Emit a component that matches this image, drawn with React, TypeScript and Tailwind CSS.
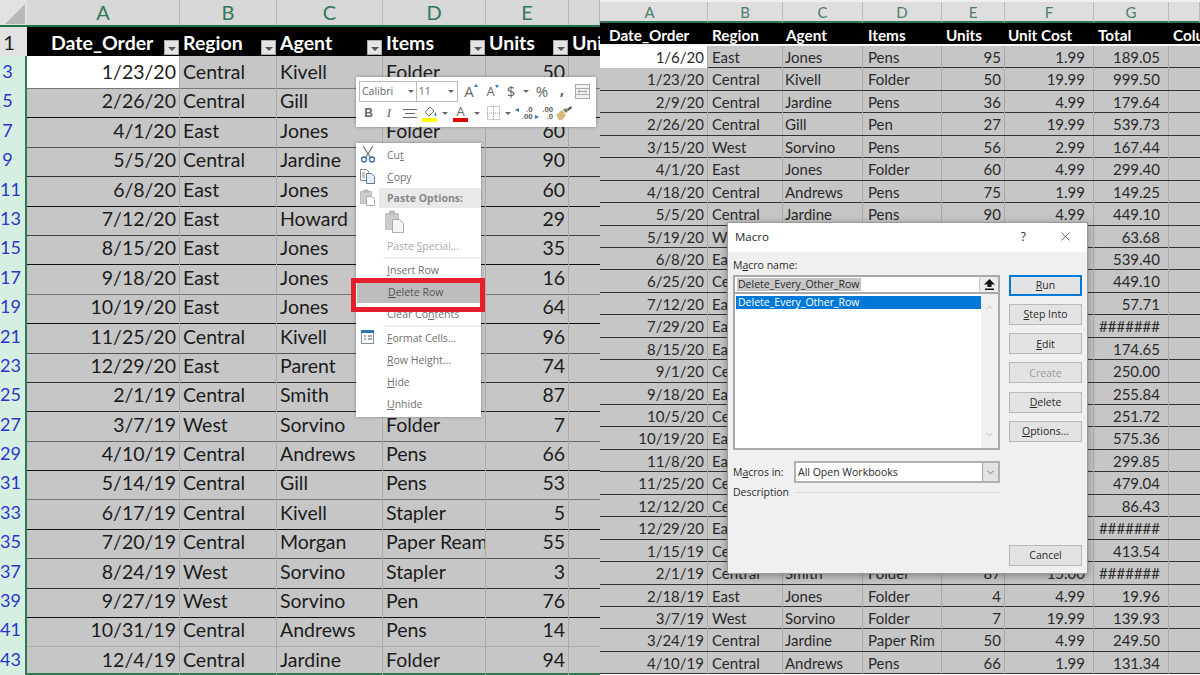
import { ChevronDown, ChevronUp, X } from 'lucide-react';
import type { ReactNode } from 'react';

const leftRows = [
  ['3', '1/23/20', 'Central', 'Kivell', 'Folder', '50'],
  ['5', '2/26/20', 'Central', 'Gill', 'Pen', '27'],
  ['7', '4/1/20', 'East', 'Jones', 'Folder', '60'],
  ['9', '5/5/20', 'Central', 'Jardine', 'Pens', '90'],
  ['11', '6/8/20', 'East', 'Jones', 'Pens', '60'],
  ['13', '7/12/20', 'East', 'Howard', 'Pens', '29'],
  ['15', '8/15/20', 'East', 'Jones', 'Pens', '35'],
  ['17', '9/18/20', 'East', 'Jones', 'Pens', '16'],
  ['19', '10/19/20', 'East', 'Jones', 'Pens', '64'],
  ['21', '11/25/20', 'Central', 'Kivell', 'Pens', '96'],
  ['23', '12/29/20', 'East', 'Parent', 'Pens', '74'],
  ['25', '2/1/19', 'Central', 'Smith', 'Folder', '87'],
  ['27', '3/7/19', 'West', 'Sorvino', 'Folder', '7'],
  ['29', '4/10/19', 'Central', 'Andrews', 'Pens', '66'],
  ['31', '5/14/19', 'Central', 'Gill', 'Pens', '53'],
  ['33', '6/17/19', 'Central', 'Kivell', 'Stapler', '5'],
  ['35', '7/20/19', 'Central', 'Morgan', 'Paper Ream', '55'],
  ['37', '8/24/19', 'West', 'Sorvino', 'Stapler', '3'],
  ['39', '9/27/19', 'West', 'Sorvino', 'Pen', '76'],
  ['41', '10/31/19', 'Central', 'Andrews', 'Pens', '14'],
  ['43', '12/4/19', 'Central', 'Jardine', 'Folder', '94'],
];

// the gridlines came out uneven in the downscaled shot
const leftLines = [
  'border-[#777]', 'border-[#111]', 'border-[#555]', 'border-[#333]', 'border-[#111]', 'border-[#444]', 'border-[#111]',
  'border-[#777]', 'border-[#111]', 'border-[#555]', 'border-[#333]', 'border-[#222]', 'border-[#666]', 'border-[#111]',
  'border-[#777]', 'border-[#111]', 'border-[#555]', 'border-[#333]', 'border-[#111]', 'border-[#aaa]', 'border-transparent',
];

const rightRows = [
  ['1/6/20', 'East', 'Jones', 'Pens', '95', '1.99', '189.05'],
  ['1/23/20', 'Central', 'Kivell', 'Folder', '50', '19.99', '999.50'],
  ['2/9/20', 'Central', 'Jardine', 'Pens', '36', '4.99', '179.64'],
  ['2/26/20', 'Central', 'Gill', 'Pen', '27', '19.99', '539.73'],
  ['3/15/20', 'West', 'Sorvino', 'Pens', '56', '2.99', '167.44'],
  ['4/1/20', 'East', 'Jones', 'Folder', '60', '4.99', '299.40'],
  ['4/18/20', 'Central', 'Andrews', 'Pens', '75', '1.99', '149.25'],
  ['5/5/20', 'Central', 'Jardine', 'Pens', '90', '4.99', '449.10'],
  ['5/19/20', 'West', '', '', '', '', '63.68'],
  ['6/8/20', 'East', '', '', '', '', '539.40'],
  ['6/25/20', 'Central', '', '', '', '', '449.10'],
  ['7/12/20', 'East', '', '', '', '', '57.71'],
  ['7/29/20', 'East', '', '', '', '', '#######'],
  ['8/15/20', 'East', '', '', '', '', '174.65'],
  ['9/1/20', 'Central', '', '', '', '', '250.00'],
  ['9/18/20', 'East', '', '', '', '', '255.84'],
  ['10/5/20', 'Central', '', '', '', '', '251.72'],
  ['10/19/20', 'East', '', '', '', '', '575.36'],
  ['11/8/20', 'East', '', '', '', '', '299.85'],
  ['11/25/20', 'Central', '', '', '', '', '479.04'],
  ['12/12/20', 'Central', '', '', '', '', '86.43'],
  ['12/29/20', 'East', '', '', '', '', '#######'],
  ['1/15/19', 'Central', '', '', '', '', '413.54'],
  ['2/1/19', 'Central', 'Smith', 'Folder', '87', '15.00', '#######'],
  ['2/18/19', 'East', 'Jones', 'Folder', '4', '4.99', '19.96'],
  ['3/7/19', 'West', 'Sorvino', 'Folder', '7', '19.99', '139.93'],
  ['3/24/19', 'Central', 'Jardine', 'Paper Rim', '50', '4.99', '249.50'],
  ['4/10/19', 'Central', 'Andrews', 'Pens', '66', '1.99', '131.34'],
];

function FilterButton() {
  return (
    <span className="mb-[2px] mr-[1px] flex h-[15px] w-[15px] shrink-0 items-center justify-center border border-[#aaa] bg-[#e4e4e4]">
      <span className="mt-[2px] h-0 w-0 border-x-[4px] border-t-[4px] border-x-transparent border-t-[#555]" />
    </span>
  );
}

function LeftHeaderCell({ label, first }: { label: string; first?: boolean }) {
  return (
    <div className={`flex items-end justify-between overflow-hidden ${first ? 'pl-6' : 'pl-[3px]'}`}>
      <span className="mt-[2px] self-center whitespace-nowrap text-[19.5px] font-bold leading-none text-white">{label}</span>
      <FilterButton />
    </div>
  );
}

function LeftSheet() {
  return (
    <div className="w-[600px] text-[19.5px] text-[#1c1c1c]">
      <div className="grid h-[27px] grid-cols-[27px_153px_97px_106px_103px_83px_31px] border-b-2 border-[#217346] bg-[#d8d8d8] text-center text-[20px] leading-[25px] text-[#2f7a55]">
        <div className="relative bg-[#e2e2e2]">
          <span className="absolute right-[2px] bottom-[1px] h-0 w-0 border-b-[20px] border-l-[20px] border-b-[#b9b9b9] border-l-transparent" />
        </div>
        {['A', 'B', 'C', 'D', 'E', ''].map((c, i) => (
          <div key={i} className="border-r border-[#b8b8b8] first:border-l">{c}</div>
        ))}
      </div>
      <div className="grid h-[29px] grid-cols-[27px_153px_97px_106px_103px_83px_31px] bg-black">
        <div className="bg-[#e2e2e2] pr-[9px] text-center text-[20px] leading-[30px] text-[#222]">1</div>
        <LeftHeaderCell label="Date_Order" first />
        <LeftHeaderCell label="Region" />
        <LeftHeaderCell label="Agent" />
        <LeftHeaderCell label="Items" />
        <LeftHeaderCell label="Units" />
        <div className="overflow-hidden pl-[3px] text-[19.5px] font-bold leading-[31px] text-white">Units</div>
      </div>
      {leftRows.map((r, i) => (
        <div key={r[0]} className="grid h-[29.4px] grid-cols-[27px_153px_97px_106px_103px_83px_31px] bg-[#c6c6c6] leading-[31px]">
          <div className="border-r-2 border-b-2 border-r-[#2f7a55] border-b-[#f4f4f4] bg-[#d5f0e2] pr-[10px] text-center text-[18px] text-[#2a35cc]">{r[0]}</div>
          <div className={`border-b border-r border-r-[#aaa] pr-[3px] text-right ${leftLines[i]} ${i === 0 ? 'bg-white' : ''}`}>{r[1]}</div>
          <div className={`border-b border-r border-r-[#aaa] pl-[3px] ${leftLines[i]}`}>{r[2]}</div>
          <div className={`border-b border-r border-r-[#aaa] pl-[3px] ${leftLines[i]}`}>{r[3]}</div>
          <div className={`overflow-hidden whitespace-nowrap border-b border-r border-r-[#aaa] pl-[3px] ${leftLines[i]}`}>{r[4]}</div>
          <div className={`border-b border-r border-r-[#aaa] pr-[3px] text-right ${leftLines[i]}`}>{r[5]}</div>
          <div className={`border-b ${leftLines[i]}`} />
        </div>
      ))}
      <div className="ml-[25px] h-[2px] bg-[#2f7a55]" />
    </div>
  );
}

function RightSheet() {
  const grid = 'grid grid-cols-[108px_75px_80px_79px_63px_89px_75px_31px]';
  return (
    <div className="w-[600px] text-[15px] text-[#2a2a2a]">
      <div className={`${grid} h-[23px] border-t-2 border-b-2 border-t-[#f0f0f0] border-b-[#2f7a55] bg-[#dedede] text-center leading-[20px] text-[#4a8068]`}>
        {['A', 'B', 'C', 'D', 'E', 'F', 'G', ''].map((c, i) => (
          <div key={i} className="border-r border-[#b8b8b8] first:pr-2">{c}</div>
        ))}
      </div>
      <div className={`${grid} h-[23px] overflow-hidden border-b-2 border-[#f2f6f3] bg-black text-[15.3px] font-bold leading-[24px] text-white`}>
        <div className="pl-[9px]">Date_Order</div>
        <div className="pl-1">Region</div>
        <div className="pl-[3px]">Agent</div>
        <div className="pl-[5px]">Items</div>
        <div className="pl-1">Units</div>
        <div className="pl-[3px]">Unit Cost</div>
        <div className="pl-1">Total</div>
        <div className="whitespace-nowrap pl-1">Column1</div>
      </div>
      {rightRows.map((r, i) => (
        <div key={r[0]} className={`${grid} h-[22.44px] border-b border-[#333] bg-[#c6c6c6] leading-[22px]`}>
          <div className={`border-r border-[#aaa] pr-[3px] text-right ${i === 0 ? 'bg-white' : ''}`}>{r[0]}</div>
          <div className="border-r border-[#aaa] pl-1">{r[1]}</div>
          <div className="border-r border-[#aaa] pl-[2px]">{r[2]}</div>
          <div className="border-r border-[#aaa] pl-[5px]">{r[3]}</div>
          <div className="border-r border-[#aaa] pr-[3px] text-right">{r[4]}</div>
          <div className="border-r border-[#aaa] pr-2 text-right">{r[5]}</div>
          <div className="border-r border-[#aaa] pr-2 text-right">{r[6]}</div>
          <div />
        </div>
      ))}
    </div>
  );
}

function Caret() {
  return <span className="h-0 w-0 border-x-[3px] border-t-[3px] border-x-transparent border-t-[#666]" />;
}

function Slot({ w, children }: { w: string; children?: ReactNode }) {
  return <div className={`flex h-5 shrink-0 items-center justify-center ${w}`}>{children}</div>;
}

function MiniToolbar() {
  return (
    <div className="absolute left-[356px] top-[77px] h-[50px] w-[240px] bg-white px-[3px] pt-1 font-['Open_Sans',sans-serif] text-[#666] shadow-[0_0_3px_rgba(0,0,0,0.35)]">
      <div className="flex h-[21px] items-center">
        <div className="flex h-[21px] w-[59px] items-center justify-between border border-[#bbb] px-[2px] text-[10.5px]">
          Calibri
          <Caret />
        </div>
        <div className="flex h-[21px] w-[42px] items-center justify-between border border-l-0 border-[#bbb] pl-[2px] pr-[3px] text-[10.5px]">
          11
          <Caret />
        </div>
        <Slot w="w-[22px]">
          <span className="relative text-[15px] leading-none text-[#666]">A<span className="absolute -right-[4px] top-0 h-0 w-0 border-x-[2px] border-b-[3px] border-x-transparent border-b-[#2e75b6]" /></span>
        </Slot>
        <Slot w="w-[21px]">
          <span className="relative text-[13px] leading-none text-[#666]">A<span className="absolute -right-[4px] top-0 h-0 w-0 border-x-[2px] border-t-[3px] border-x-transparent border-t-[#2e75b6]" /></span>
        </Slot>
        <Slot w="w-[20px]"><span className="text-[15px]">$</span></Slot>
        <Slot w="w-[10px]"><Caret /></Slot>
        <Slot w="w-[22px]"><span className="text-[15px]">%</span></Slot>
        <Slot w="w-[18px]"><span className="-mt-[5px] text-[16px] font-bold leading-none">,</span></Slot>
        <Slot w="w-[22px]">
          <svg width="15" height="15" viewBox="0 0 15 15" fill="none" stroke="#aaa">
            <rect x="0.5" y="0.5" width="14" height="14" fill="#f2f2f2" />
            <path d="M0 4.5h15M0 10.5h15M3 7.5h9M3 7.5l2-1.5M3 7.5l2 1.5M12 7.5l-2-1.5M12 7.5l-2 1.5" />
          </svg>
        </Slot>
      </div>
      <div className="mt-[1px] flex h-5 items-center">
        <Slot w="w-[19px]"><span className="font-['Liberation_Sans',sans-serif] text-[12px] font-bold">B</span></Slot>
        <Slot w="w-[22px]"><span className="font-['Liberation_Serif',serif] text-[13px] italic">I</span></Slot>
        <Slot w="w-[20px]">
          <svg width="14" height="11" viewBox="0 0 14 11" stroke="#666"><path d="M0 1.5h14M2 5.5h10M0 9.5h14" /></svg>
        </Slot>
        <Slot w="w-[20px]">
          <svg width="16" height="17" viewBox="0 0 16 17" fill="none">
            <path d="M3 7l5-5 4 4-5 5z" stroke="#777" fill="#fff" />
            <path d="M13 7c1 2 2 3 1 4s-2-1-1-4z" fill="#2e75b6" />
            <rect x="0" y="13" width="15" height="4" fill="#ffff00" />
          </svg>
        </Slot>
        <Slot w="w-[10px]"><Caret /></Slot>
        <Slot w="w-[21px]">
          <span className="relative flex h-[17px] w-[15px] justify-center text-[13px] leading-[13px] text-[#666]">A<span className="absolute bottom-0 left-0 h-[4px] w-[15px] bg-[#e00000]" /></span>
        </Slot>
        <Slot w="w-[12px]"><Caret /></Slot>
        <Slot w="w-[20px]">
          <svg width="13" height="14" viewBox="0 0 13 14" fill="none" stroke="#999" strokeDasharray="1 1">
            <rect x="0.5" y="0.5" width="12" height="13" />
            <path d="M0 7h13M6.5 0v14" />
          </svg>
        </Slot>
        <Slot w="w-[10px]"><Caret /></Slot>
        <Slot w="w-[21px]">
          <span className="relative flex h-[15px] w-[18px] flex-col items-end text-[7.5px] font-bold leading-[7.5px]">
            <span>.0</span>
            <span>.00</span>
            <span className="absolute left-0 top-[2px] h-0 w-0 border-y-[2.5px] border-r-[4px] border-y-transparent border-r-[#2e75b6]" />
          </span>
        </Slot>
        <Slot w="w-[20px]">
          <span className="relative flex h-[15px] w-[18px] flex-col items-end text-[7.5px] font-bold leading-[7.5px]">
            <span>.00</span>
            <span>.0</span>
            <span className="absolute left-0 bottom-[2px] h-0 w-0 border-y-[2.5px] border-l-[4px] border-y-transparent border-l-[#2e75b6]" />
          </span>
        </Slot>
        <Slot w="w-[20px]">
          <svg width="16" height="14" viewBox="0 0 16 14">
            <path d="M0 9l6-5 4 5-4 5H3z" fill="#d9b679" />
            <path d="M7 4l3-2 2 3-2 2z" fill="#777" />
            <path d="M11 3l4-3 1 2-4 3z" fill="#555" />
          </svg>
        </Slot>
      </div>
    </div>
  );
}

function MenuItem({ before, key_, after, muted, active }: { before?: string; key_: string; after?: string; muted?: boolean; active?: boolean }) {
  return (
    <div className={`h-[22px] pl-[31px] leading-[22px] ${muted ? 'text-[#aaa]' : ''} ${active ? 'bg-[#bdbdbd] text-[#555]' : ''}`}>
      {before}<u>{key_}</u>{after}
    </div>
  );
}

function MenuIcon({ top, children }: { top: string; children: ReactNode }) {
  return <div className={`absolute left-[4px] ${top}`}>{children}</div>;
}

function ContextMenu() {
  return (
    <div className="absolute left-[356px] top-[143px] h-[274px] w-[125px] bg-white py-px font-['Open_Sans',sans-serif] text-[10.5px] text-[#707070] shadow-[0_0_3px_rgba(0,0,0,0.35)]">
      <MenuIcon top="top-[3px]">
        <svg width="16" height="17" viewBox="0 0 16 17" fill="none">
          <path d="M3 0l7 11M13 0L6 11" stroke="#777" strokeWidth="1.3" />
          <circle cx="4" cy="13.5" r="2.5" stroke="#2e6da4" strokeWidth="1.3" />
          <circle cx="12" cy="13.5" r="2.5" stroke="#2e6da4" strokeWidth="1.3" />
        </svg>
      </MenuIcon>
      <MenuIcon top="top-[26px]">
        <svg width="16" height="15" viewBox="0 0 16 15" fill="none" stroke="#888">
          <path d="M0.5 0.5h6l2 2v9h-8z" fill="#fff" />
          <path d="M6.5 4.5h5l3 3v7h-8z" fill="#e8eef5" stroke="#5b7ea5" />
          <path d="M2 4h3M2 6h3M2 8h3" />
        </svg>
      </MenuIcon>
      <MenuIcon top="top-[46px]">
        <svg width="16" height="17" viewBox="0 0 16 17" fill="none">
          <path d="M0.5 2.5h11v12h-11z" fill="#ccc" stroke="#bbb" />
          <rect x="3.5" y="0.5" width="5" height="3" fill="#bbb" />
          <path d="M6.5 7.5h5l3 3v6h-8z" fill="#fff" stroke="#aaa" />
        </svg>
      </MenuIcon>
      <MenuItem before="Cu" key_="t" />
      <MenuItem key_="C" after="opy" />
      <div className="ml-[23px] h-5 bg-[#e9e9e9] pl-2 font-bold leading-5 text-[#888]">Paste Options:</div>
      <div className="h-[27px] pl-[29px] pt-[2px]">
        <svg width="20" height="23" viewBox="0 0 20 23" fill="none">
          <path d="M0.5 3.5h13v16h-13z" fill="#ccc" stroke="#c4c4c4" />
          <rect x="4" y="0.5" width="6" height="4" fill="#bbb" />
          <path d="M7.5 9.5h7l4 4v9h-11z" fill="#f6f6f6" stroke="#aaa" />
        </svg>
      </div>
      <MenuItem before="Paste " key_="S" after="pecial..." muted />
      <div className="ml-[27px] h-[2px] bg-[#eee]" />
      <MenuItem key_="I" after="nsert Row" />
      <div className="px-px"><MenuItem key_="D" after="elete Row" active /></div>
      <MenuItem before="Clear Co" key_="n" after="tents" />
      <div className="ml-[27px] h-[2px] bg-[#eee]" />
      <div className="relative">
        <MenuIcon top="top-[2px]">
          <svg width="15" height="16" viewBox="0 0 15 16" fill="none">
            <rect x="1.5" y="1.5" width="12" height="13" stroke="#7d94ad" fill="#fff" />
            <rect x="1" y="1" width="13" height="3" fill="#2e75b6" />
            <path d="M4 7h2M8 7h4M4 10h2M8 10h4" stroke="#555" />
          </svg>
        </MenuIcon>
        <MenuItem key_="F" after="ormat Cells..." />
      </div>
      <MenuItem key_="R" after="ow Height..." />
      <MenuItem key_="H" after="ide" />
      <MenuItem key_="U" after="nhide" />
    </div>
  );
}

function DialogButton({ children, disabled, primary, className }: { children: ReactNode; disabled?: boolean; primary?: boolean; className?: string }) {
  return (
    <div className={`flex h-[21px] w-[73px] items-center justify-center border ${primary ? 'border-2 border-[#0078d7]' : 'border-[#b8b8b8]'} bg-[#e3e3e3] ${disabled ? 'text-[#999]' : ''} ${className ?? ''}`}>
      {children}
    </div>
  );
}

function MacroDialog() {
  return (
    <div className="absolute left-[127px] top-[222px] h-[352px] w-[361px] border border-[#9a9a9a] bg-[#f0f0f0] font-['Open_Sans',sans-serif] text-[10.5px] leading-none text-[#2a2a2a] shadow-[0_2px_8px_rgba(0,0,0,0.35)]">
      <div className="flex h-[29px] items-center bg-white pb-[2px] pl-[7px] text-[11.5px]">
        Macro
        <span className="ml-auto mr-[32px] text-[12px]">?</span>
        <X size={15} strokeWidth={1.1} className="mr-[14px] text-[#333]" />
      </div>
      <div className="flex pl-[5px] pr-[5px] pt-[7px]">
        <div className="w-[268px]">
          <div className="h-[16px] leading-[13px]">M<span className="underline">a</span>cro name:</div>
          <div className="flex h-[19px] border-2 border-[#a8a8a8] bg-white">
            <div className="flex min-w-0 flex-1 items-center pl-[2px]">
              <span className="bg-[#c6c6c6] px-px leading-[13px]">Delete_Every_Other_Row</span>
            </div>
            <div className="flex w-[19px] items-center justify-center border-l border-[#ccc] bg-[#ececec]">
              <svg width="11" height="11" viewBox="0 0 11 11" fill="#111"><path d="M5.5 0L11 5.5H7.5V8h-4V5.5H0zM1 9.5h9V11H1z" /></svg>
            </div>
          </div>
          <div className="flex h-[156px] border-2 border-t-0 border-[#a8a8a8] bg-white">
            <div className="min-w-0 flex-1 pl-px pt-[2px]">
              <div className="flex h-[13px] items-center bg-[#0078d7] pl-[2px] text-white">Delete_Every_Other_Row</div>
            </div>
            <div className="flex w-[17px] flex-col items-center justify-between bg-[#f0f0f0] py-2 text-[#bbb]">
              <ChevronUp size={11} />
              <ChevronDown size={11} />
            </div>
          </div>
          <div className="mt-[11px] flex h-[22px] items-center">
            <div className="w-[61px]">M<span className="underline">a</span>cros in:</div>
            <div className="flex h-[22px] flex-1 items-center border-2 border-[#b0b0b0] bg-white pl-[2px]">
              All Open Workbooks
              <div className="ml-auto flex h-full w-4 items-center justify-center border-l border-[#aaa] bg-[#e3e3e3] text-[#666]">
                <ChevronDown size={11} />
              </div>
            </div>
          </div>
          <div className="mt-[3px] flex h-[12px] items-center">
            Description
            <div className="ml-[5px] h-px flex-1 bg-[#ddd]" />
          </div>
        </div>
        <div className="ml-[9px] flex h-[307px] flex-col gap-[8.15px] pt-[16px]">
          <DialogButton primary><span><u>R</u>un</span></DialogButton>
          <DialogButton><span><u>S</u>tep Into</span></DialogButton>
          <DialogButton><span><u>E</u>dit</span></DialogButton>
          <DialogButton disabled>Create</DialogButton>
          <DialogButton><span><u>D</u>elete</span></DialogButton>
          <DialogButton><span><u>O</u>ptions...</span></DialogButton>
          <DialogButton className="mt-auto">Cancel</DialogButton>
        </div>
      </div>
    </div>
  );
}

export default function App() {
  return (
    <div className="flex h-[675px] w-[1200px] overflow-hidden bg-white font-[Lato,sans-serif]">
      <div className="relative h-[675px] w-[600px] overflow-hidden">
        <LeftSheet />
        <MiniToolbar />
        <ContextMenu />
        <div className="absolute left-[351px] top-[278px] h-[34px] w-[134px] border-[5px] border-[#e5202c]" />
      </div>
      <div className="relative h-[675px] w-[600px] overflow-hidden">
        <RightSheet />
        <MacroDialog />
      </div>
    </div>
  );
}
